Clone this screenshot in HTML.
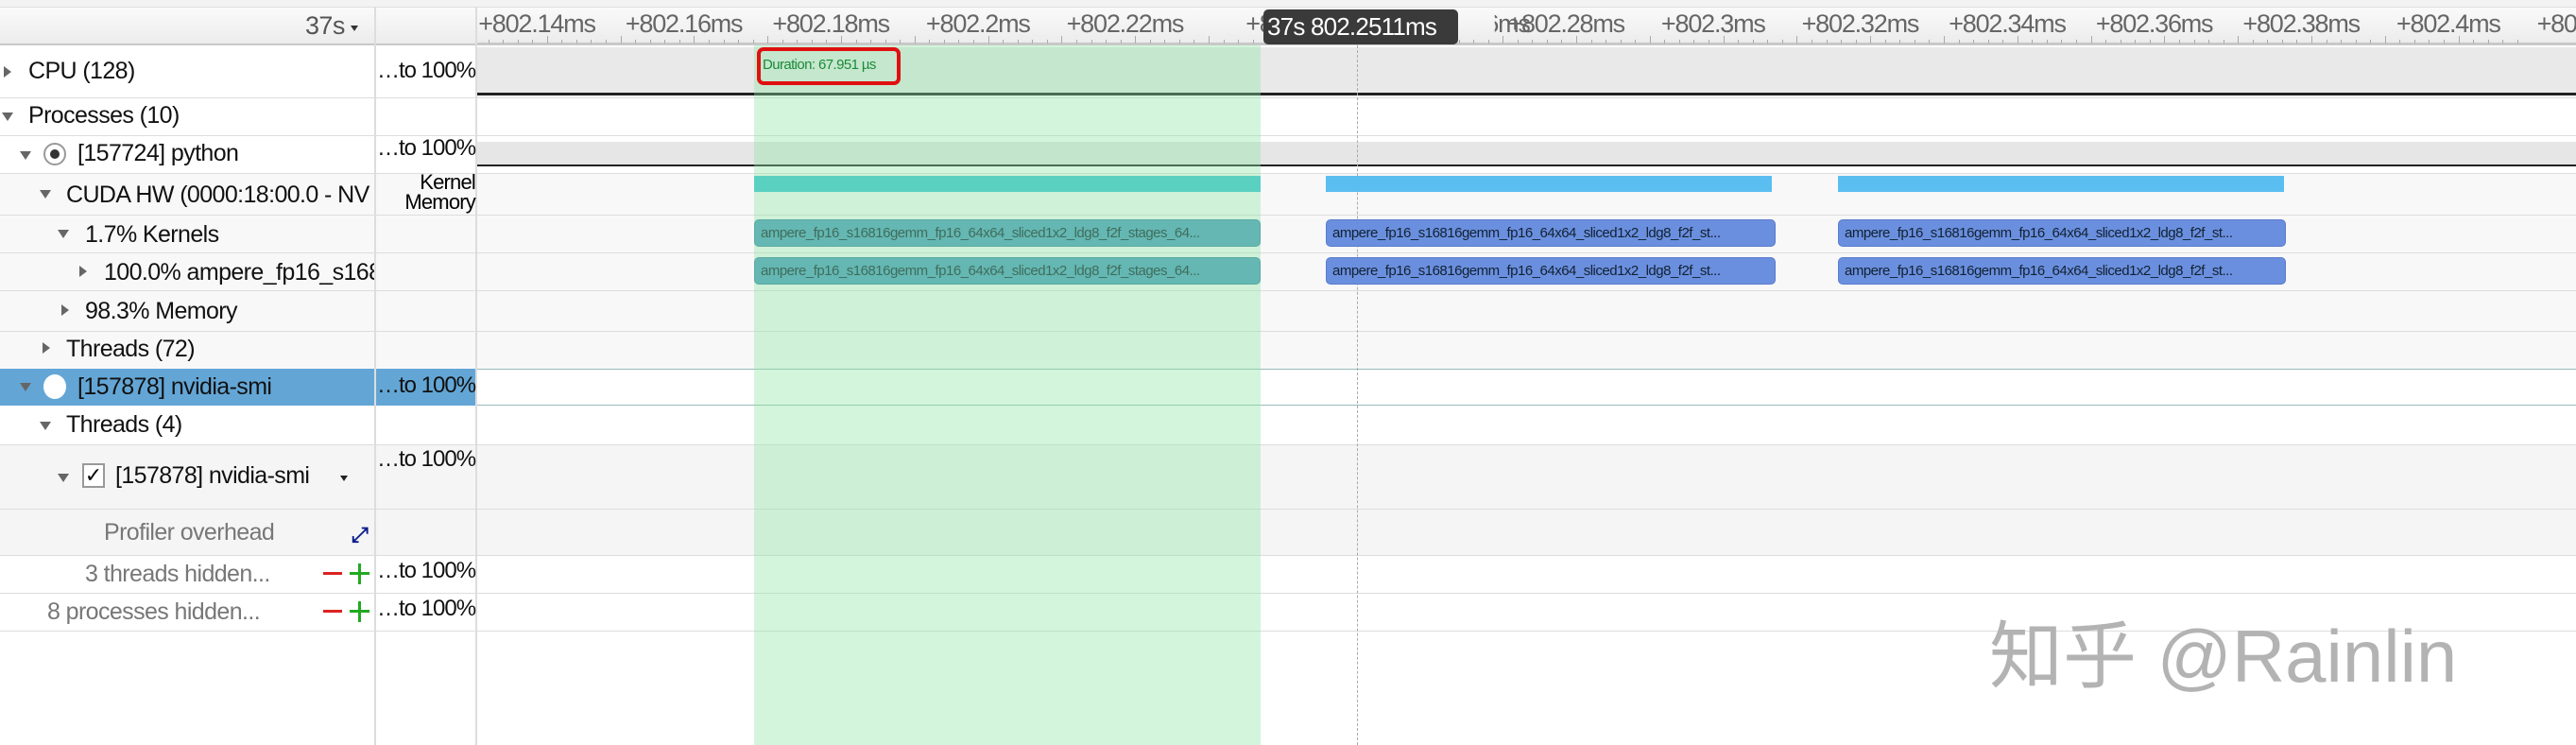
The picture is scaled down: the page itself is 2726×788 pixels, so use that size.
<!DOCTYPE html>
<html><head><meta charset="utf-8"><style>
*{margin:0;padding:0;box-sizing:border-box}
body{width:2726px;height:788px;overflow:hidden;background:#fff;font-family:"Liberation Sans",sans-serif;position:relative}
.a{position:absolute}
.t{position:absolute;font-size:25px;color:#111;white-space:nowrap;letter-spacing:-0.6px}
.tri{position:absolute;width:0;height:0}
.dn{border-left:6px solid transparent;border-right:6px solid transparent;border-top:9px solid #666}
.rt{border-top:6px solid transparent;border-bottom:6px solid transparent;border-left:8px solid #666}
.hl{position:absolute;left:0;width:2726px;height:1px;background:#ddd}
.sl{position:absolute;height:29px;border-radius:5px;font-size:15px;color:#123;padding:5px 0 0 6px;white-space:nowrap;overflow:hidden;letter-spacing:-0.5px}
.teal{background:#4d9cbd;border:1px solid #3f88a8}
.blue{background:#6b8fdf;border:1px solid #5a7ccc}
.pct{position:absolute;left:399px;font-size:24px;color:#111;letter-spacing:-1px;white-space:nowrap}
.lbl{position:absolute;top:10px;font-size:27px;color:#666;transform:translateX(-50%);white-space:nowrap;letter-spacing:-1.2px}
</style></head><body>
<div class="a" style="left:0;top:0;width:2726px;height:8px;background:#f3f3f3;border-bottom:1px solid #ddd"></div>
<div class="a" style="left:0;top:8px;width:2726px;height:40px;background:linear-gradient(#fafafa,#ececec);border-bottom:3px solid #c8c8c8"></div>
<div class="t" style="left:323px;top:12px;color:#555;font-size:27px">37s</div>
<div class="tri dn" style="left:371px;top:27px;border-top-color:#333;border-width:6px 4px 0 4px"></div>
<div id="lbls"></div>
<div class="a" style="left:0;top:48px;width:2726px;height:55px;background:#fff"></div>
<div class="a" style="left:505px;top:50px;width:2221px;height:48px;background:#e9e9e9"></div>
<div class="a" style="left:505px;top:98px;width:2221px;height:3px;background:#222"></div>
<div class="hl" style="top:103px"></div>
<div class="a" style="left:505px;top:150px;width:2221px;height:24px;background:#e6e6e6"></div>
<div class="a" style="left:505px;top:174px;width:2221px;height:2px;background:#222"></div>
<div class="hl" style="top:143px"></div>
<div class="hl" style="top:183px"></div>
<div class="a" style="left:0;top:184px;width:2726px;height:243px;background:#f8f8f8"></div>
<div class="hl" style="top:227px"></div>
<div class="hl" style="top:267px"></div>
<div class="hl" style="top:307px"></div>
<div class="hl" style="top:350px"></div>
<div class="a" style="left:0;top:390px;width:503px;height:39px;background:#63a6d6"></div>
<div class="a" style="left:505px;top:390px;width:2221px;height:39px;background:#fff;border-top:1px solid #9bb;border-bottom:1px solid #9bb"></div>
<div class="hl" style="top:470px"></div>
<div class="a" style="left:0;top:471px;width:2726px;height:116px;background:#f5f5f5"></div>
<div class="hl" style="top:538px"></div>
<div class="hl" style="top:587px"></div>
<div class="hl" style="top:627px"></div>
<div class="hl" style="top:667px"></div>
<div class="a" style="left:396px;top:8px;width:2px;height:780px;background:#ddd"></div>
<div class="a" style="left:503px;top:8px;width:2px;height:780px;background:#ddd"></div>

<div class="tri rt" style="left:4px;top:70px"></div><div class="t" style="left:30px;top:61px">CPU (128)</div>
<div class="pct" style="top:61px">…to 100%</div>
<div class="tri dn" style="left:2px;top:119px"></div><div class="t" style="left:30px;top:108px">Processes (10)</div>
<div class="tri dn" style="left:21px;top:160px"></div>
<div class="a" style="left:46px;top:151px;width:24px;height:24px;border-radius:50%;border:2px solid #999;background:#fff"></div>
<div class="a" style="left:53px;top:158px;width:10px;height:10px;border-radius:50%;background:#333"></div>
<div class="t" style="left:82px;top:148px">[157724] python</div>
<div class="pct" style="top:143px">…to 100%</div>
<div class="tri dn" style="left:42px;top:201px"></div><div class="t" style="left:70px;top:192px;width:326px;overflow:hidden">CUDA HW (0000:18:00.0 - NV</div>
<div class="a" style="left:400px;top:182px;width:103px;text-align:right;font-size:22px;line-height:21px;letter-spacing:-0.8px">Kernel<br>Memory</div>
<div class="tri dn" style="left:61px;top:243px"></div><div class="t" style="left:90px;top:234px">1.7% Kernels</div>
<div class="tri rt" style="left:84px;top:281px"></div><div class="t" style="left:110px;top:274px;width:286px;overflow:hidden">100.0% ampere_fp16_s16816</div>
<div class="tri rt" style="left:65px;top:322px"></div><div class="t" style="left:90px;top:315px">98.3% Memory</div>
<div class="tri rt" style="left:45px;top:362px"></div><div class="t" style="left:70px;top:355px">Threads (72)</div>
<div class="tri dn" style="left:21px;top:405px"></div>
<div class="a" style="left:46px;top:396px;width:24px;height:26px;border-radius:50%;background:#fff"></div>
<div class="t" style="left:82px;top:395px">[157878] nvidia-smi</div>
<div class="pct" style="top:394px">…to 100%</div>
<div class="tri dn" style="left:42px;top:446px"></div><div class="t" style="left:70px;top:435px">Threads (4)</div>
<div class="tri dn" style="left:61px;top:501px"></div>
<div class="a" style="left:87px;top:490px;width:24px;height:26px;border:2px solid #999;background:#fff;font-size:22px;line-height:22px;text-align:center">✓</div>
<div class="t" style="left:122px;top:489px">[157878] nvidia-smi</div>
<div class="tri dn" style="left:360px;top:503px;border-width:6px 4px 0 4px;border-top-color:#222"></div>
<div class="pct" style="top:472px">…to 100%</div>
<div class="t" style="left:110px;top:549px;color:#777">Profiler overhead</div>
<div class="a" style="left:372px;top:553px;color:#0b1d8a;font-size:22px;font-weight:bold">⤢</div>
<div class="t" style="left:90px;top:593px;color:#777">3 threads hidden...</div>
<div class="a" style="left:342px;top:605px;width:20px;height:3px;background:#d22"></div>
<div class="a" style="left:379px;top:596px;width:3px;height:22px;background:#2a2"></div><div class="a" style="left:370px;top:605px;width:21px;height:3px;background:#2a2"></div>
<div class="pct" style="top:590px">…to 100%</div>
<div class="t" style="left:50px;top:633px;color:#777">8 processes hidden...</div>
<div class="a" style="left:342px;top:645px;width:20px;height:3px;background:#d22"></div>
<div class="a" style="left:379px;top:636px;width:3px;height:22px;background:#2a2"></div><div class="a" style="left:370px;top:645px;width:21px;height:3px;background:#2a2"></div>
<div class="pct" style="top:630px">…to 100%</div>

<div class="a" style="left:1436px;top:48px;width:0;height:740px;border-left:1px dashed #aaa"></div>
<div class="a" style="left:798px;top:186px;width:536px;height:17px;background:#3cc4d6"></div>
<div class="a" style="left:1403px;top:186px;width:472px;height:17px;background:#5bbef0"></div>
<div class="a" style="left:1945px;top:186px;width:472px;height:17px;background:#5bbef0"></div>
<div class="sl teal" style="left:798px;top:232px;width:536px">ampere_fp16_s16816gemm_fp16_64x64_sliced1x2_ldg8_f2f_stages_64...</div>
<div class="sl teal" style="left:798px;top:272px;width:536px">ampere_fp16_s16816gemm_fp16_64x64_sliced1x2_ldg8_f2f_stages_64...</div>
<div class="sl blue" style="left:1403px;top:232px;width:476px">ampere_fp16_s16816gemm_fp16_64x64_sliced1x2_ldg8_f2f_st...</div>
<div class="sl blue" style="left:1403px;top:272px;width:476px">ampere_fp16_s16816gemm_fp16_64x64_sliced1x2_ldg8_f2f_st...</div>
<div class="sl blue" style="left:1945px;top:232px;width:474px">ampere_fp16_s16816gemm_fp16_64x64_sliced1x2_ldg8_f2f_st...</div>
<div class="sl blue" style="left:1945px;top:272px;width:474px">ampere_fp16_s16816gemm_fp16_64x64_sliced1x2_ldg8_f2f_st...</div>
<div class="a" style="left:798px;top:48px;width:536px;height:740px;background:rgba(140,230,160,0.38)"></div>
<div class="a" style="left:801px;top:50px;width:152px;height:40px;border:4px solid #e01010;border-radius:7px;font-size:15px;color:#1a8a3a;padding:6px 0 0 2px;white-space:nowrap;letter-spacing:-0.6px">Duration: 67.951 µs</div>
<div class="a" style="left:2105px;top:632px;font-size:78px;color:#b3b3b3;font-family:'Liberation Sans','Noto Sans CJK SC',sans-serif;white-space:nowrap">知乎 @Rainlin</div>
<script>
var h='';var names=['802.14','802.16','802.18','802.2','802.22','802.24','802.26','802.28','802.3','802.32','802.34','802.36','802.38','802.4','802.42'];
for(var k=0;k<names.length;k++){var x=568+155.6*k;if(k==5||k==6)continue;h+='<div class="lbl" style="left:'+x+'px">+'+names[k]+'ms</div>';}
for(var i=0;i<140;i++){var x=505+15.56*i-4;var maj=(i%5==0);h+='<div class="a" style="left:'+x+'px;top:'+(maj?38:42)+'px;width:1px;height:'+(maj?8:4)+'px;background:#aaa"></div>';}
h+='<div class="lbl" style="left:1380px;clip-path:inset(0 55% 0 0)">+802.24ms</div>';
h+='<div class="lbl" style="left:1557px;clip-path:inset(0 0 0 70%)">+802.26ms</div>';
h+='<div class="a" style="left:0;top:8px;width:505px;height:38px;background:linear-gradient(#fafafa,#ececec)"></div>';
document.getElementById('lbls').innerHTML=h;
</script>
<div class="t" style="left:323px;top:12px;color:#555;font-size:27px">37s</div>
<div class="tri dn" style="left:371px;top:27px;border-top-color:#333;border-width:6px 4px 0 4px"></div>
<div class="a" style="left:396px;top:8px;width:2px;height:40px;background:#ddd"></div>
<div class="a" style="left:503px;top:8px;width:2px;height:40px;background:#ddd"></div>
<div class="a" style="left:1337px;top:10px;width:206px;height:37px;background:#3a3a3a;border-radius:5px;color:#fff;font-size:26px;padding:3px 0 0 4px;white-space:nowrap;letter-spacing:-0.8px">37s 802.2511ms</div>
</body></html>
